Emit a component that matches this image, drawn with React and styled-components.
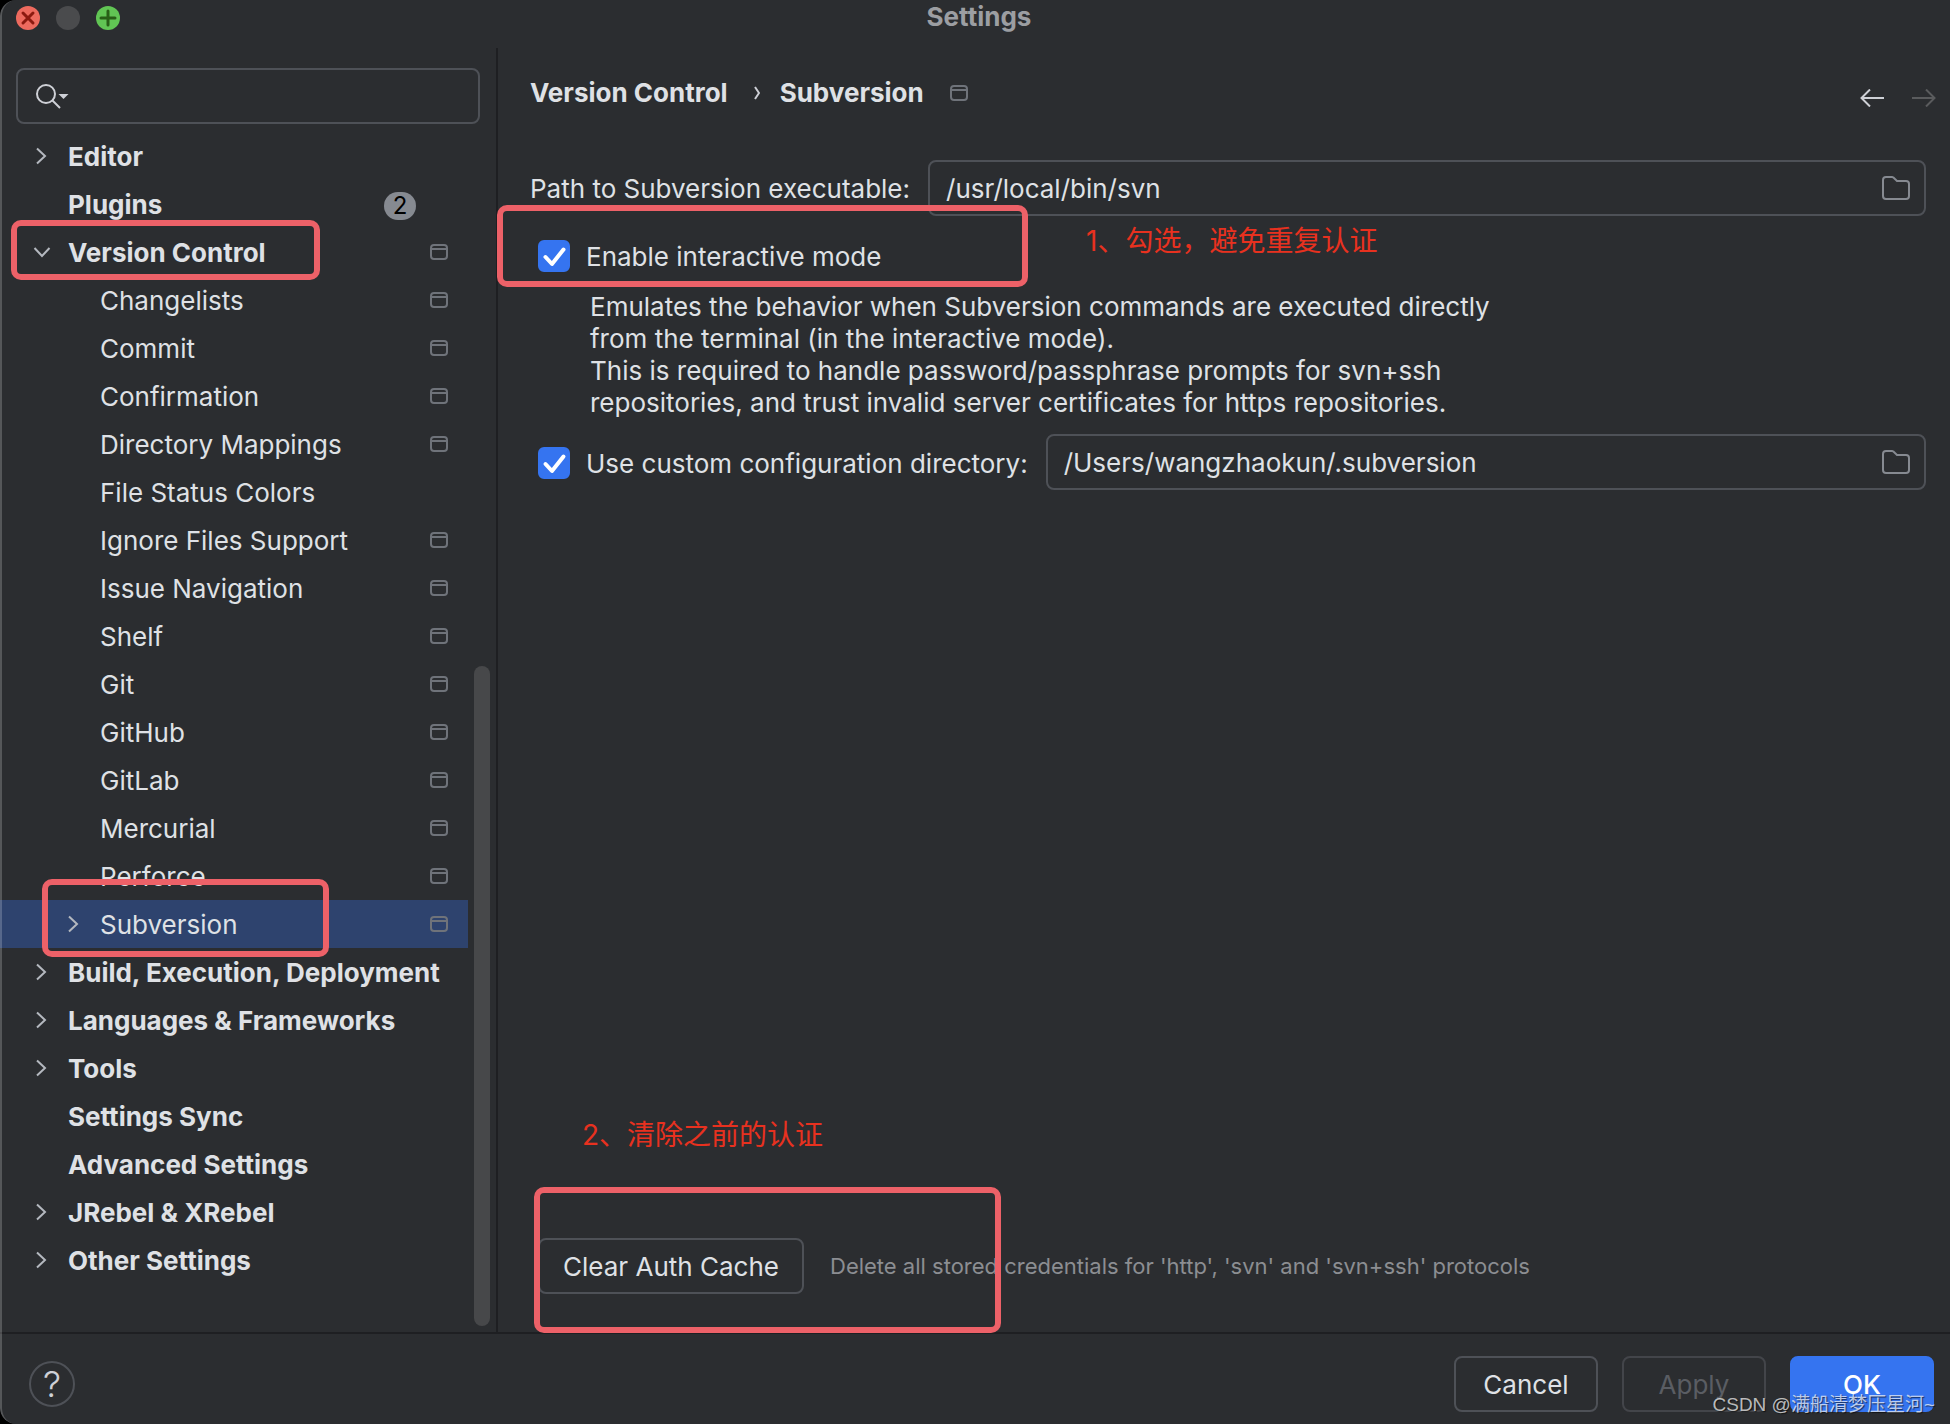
import { useState } from "react";
import styled, { createGlobalStyle, css } from "styled-components";

const GlobalStyle = createGlobalStyle`
  * {
    box-sizing: border-box;
  }

  body {
    margin: 0;
    background: #000000;
    color: #dfe1e5;
    font-family: Inter, "Liberation Sans", "Noto Sans CJK SC", sans-serif;
    font-size: 26px;
    line-height: 32px;
  }

  button,
  input {
    margin: 0;
    padding: 0;
    border: 0;
    background: none;
    color: inherit;
    font: inherit;
  }

  svg {
    display: block;
    flex: none;
  }
`;

const Window = styled.div`
  position: relative;
  display: flex;
  flex-direction: column;
  min-height: 100vh;
  background: #2b2d30;
  border-radius: 16px 0 0 16px;
  overflow: hidden;

  /* light rim on the window edge, drawn over the selected row */
  &::after {
    content: "";
    position: absolute;
    inset: 0;
    border-left: 2px solid rgba(255, 255, 255, 0.2);
    border-radius: 16px 0 0 16px;
    pointer-events: none;
  }
`;

const TitleBar = styled.header`
  display: grid;
  grid-template-columns: 1fr auto 1fr;
  align-items: center;
  height: 48px;
  padding: 0 8px 12px 16px;
`;

const Lights = styled.div`
  display: flex;
  gap: 16px;
`;

const Light = styled.button`
  width: 24px;
  height: 24px;
  border-radius: 50%;
  background: ${(props) => props.$color};
  color: ${(props) => props.$mark};
`;

const WindowTitle = styled.h1`
  margin: 0;
  padding-bottom: 2px;
  color: #9c9ea2;
  font-size: 26px;
  font-weight: 700;
`;

const Body = styled.div`
  display: flex;
  flex: 1;
`;

const Sidebar = styled.aside`
  display: flex;
  flex-direction: column;
  flex: none;
  width: 498px;
  padding-top: 20px;
  border-right: 2px solid #1e1f22;
`;

const SearchBox = styled.label`
  display: flex;
  align-items: center;
  gap: 8px;
  height: 56px;
  margin: 0 16px 8px;
  padding: 0 16px;
  border: 2px solid #4e5157;
  border-radius: 8px;

  input {
    flex: 1;
    min-width: 0;
    outline: none;
  }
`;

const TreeArea = styled.div`
  display: flex;
  flex: 1;
  gap: 6px;
  padding-right: 6px;
`;

const Tree = styled.ul`
  flex: 1;
  margin: 0;
  padding: 0;
  list-style: none;
`;

const Thumb = styled.div`
  align-self: flex-end;
  width: 16px;
  height: 55%;
  margin-bottom: 6px;
  border-radius: 8px;
  background: #47484a;
`;

const TreeItem = styled.li`
  position: relative;
`;

const Row = styled.button`
  display: flex;
  align-items: center;
  width: 100%;
  height: 48px;
  padding: 0 20px 0 ${(props) => (props.$child ? 62 : 30)}px;
  background: ${(props) => (props.$selected ? "#2e436e" : "transparent")};
  font-weight: ${(props) => (props.$child ? 400 : 700)};
  text-align: left;
  white-space: nowrap;
`;

const Arrow = styled.span`
  flex: none;
  width: 38px;
  color: #b4b8bf;
`;

const RowLabel = styled.span`
  flex: 1;
  padding-top: 2px;
`;

const Badge = styled.span`
  width: 32px;
  height: 28px;
  margin: 4px 32px 0 0;
  border-radius: 14px;
  background: #868a91;
  color: #000000;
  font-size: 24px;
  font-weight: 400;
  line-height: 28px;
  text-align: center;
`;

const Main = styled.main`
  display: flex;
  flex-direction: column;
  flex: 1;
  min-width: 0;
`;

const PageHeader = styled.div`
  display: flex;
  justify-content: space-between;
  height: 112px;
  padding: 0 14px 0 32px;
`;

const Breadcrumb = styled.nav`
  display: flex;
  align-items: center;
  height: 90px;
  font-weight: 700;

  svg {
    margin-left: 26px;
  }

  a {
    color: inherit;
    text-decoration: none;
  }

  a + svg + a {
    margin-left: 20px;
  }
`;

const History = styled.div`
  display: flex;
  align-items: center;
  gap: 28px;
  height: 100px;

  button {
    color: #ced0d6;
  }

  button:disabled {
    color: #5a5b5d;
  }
`;

const Form = styled.form`
  display: flex;
  flex-direction: column;
  flex: 1;
  padding: 0 24px 38px 32px;
`;

const FieldRow = styled.div`
  display: flex;
  align-items: center;
  gap: 18px;

  > label {
    padding-top: 2px;
  }
`;

const PathBox = styled.div`
  display: flex;
  align-items: center;
  flex: 1;
  height: 56px;
  padding: 0 14px 0 16px;
  border: 2px solid #4e5157;
  border-radius: 8px;

  input {
    flex: 1;
    min-width: 0;
    padding-top: 2px;
    outline: none;
  }

  button {
    color: #868a91;
  }
`;

const InteractiveRow = styled.div`
  position: relative;
  margin: 23px 0 18px;
  padding-left: 8px;
`;

const ConfigRow = styled(FieldRow)`
  margin-top: 15px;
  padding-left: 8px;
`;

const CheckLabel = styled.label`
  display: flex;
  align-items: center;
  gap: 16px;
  white-space: nowrap;
`;

const CheckText = styled.span`
  padding-top: 2px;
`;

const CheckBox = styled.span`
  display: grid;
  color: #ffffff;

  input,
  svg {
    grid-area: 1 / 1;
  }

  input {
    appearance: none;
    width: 32px;
    height: 32px;
    border: 2px solid #4e5157;
    border-radius: 6px;
  }

  input:checked {
    border-color: #3574f0;
    background: #3574f0;
  }

  svg {
    pointer-events: none;
    visibility: hidden;
  }

  input:checked + svg {
    visibility: visible;
  }
`;

const Description = styled.p`
  margin: 0;
  padding-left: 60px;
`;

const CacheRow = styled.div`
  position: relative;
  display: flex;
  align-items: center;
  gap: 26px;
  margin-top: auto;
  padding-left: 8px;
`;

const Hint = styled.span`
  color: #8c8e92;
  font-size: 22px;
`;

const Button = styled.button`
  min-width: ${(props) => (props.$wide ? 266 : 144)}px;
  height: 56px;
  padding-top: 2px;
  border: 2px solid #4e5157;
  border-radius: 8px;

  &:disabled {
    border-color: #43454a;
    color: #5a5d63;
  }

  ${(props) =>
    props.$primary &&
    css`
      border-color: #3574f0;
      background: #3574f0;
      color: #ffffff;
      font-weight: 500;
    `}
`;

const Footer = styled.footer`
  position: relative;
  display: flex;
  align-items: center;
  justify-content: space-between;
  height: 92px;
  padding: 10px 16px 0 29px;
  border-top: 2px solid #1e1f22;
`;

const HelpButton = styled.button`
  width: 46px;
  height: 46px;
  border: 2px solid #4e5157;
  border-radius: 50%;
  color: #ced0d6;
  font-size: 36px;
  font-weight: 300;
  line-height: 42px;
`;

const Actions = styled.div`
  display: flex;
  gap: 24px;
`;

const Watermark = styled.span`
  position: absolute;
  right: 15px;
  bottom: 4px;
  color: rgba(255, 255, 255, 0.7);
  font-family: "Liberation Sans", "Noto Sans CJK SC", sans-serif;
  font-size: 19px;
  line-height: 30px;
  text-shadow: 1px 1px 1px rgba(0, 0, 0, 0.6);
  pointer-events: none;
`;

// red frame laid over a control
const Mark = styled.span`
  position: absolute;
  z-index: 1;
  top: ${(props) => props.$top}px;
  left: ${(props) => props.$left}px;
  width: ${(props) => props.$width}px;
  height: ${(props) => props.$height}px;
  border: 6px solid #ed6168;
  border-radius: 10px;
  pointer-events: none;
`;

const Note = styled.span`
  position: absolute;
  top: ${(props) => props.$top}px;
  left: ${(props) => props.$left}px;
  color: #e8311f;
  font-family: Inter, "Noto Sans CJK SC", sans-serif;
  font-size: 28px;
  line-height: 40px;
  white-space: nowrap;
`;

const ScopeIcon = () => (
  <svg width="18" height="16" fill="none" stroke="#6f737a" strokeWidth="2">
    <rect x="1" y="1" width="16" height="14" rx="3" />
    <path d="M1 5h16" />
  </svg>
);

const ChevronRight = () => (
  <svg width="24" height="18" fill="none" stroke="currentColor" strokeWidth="2">
    <path d="M7 1.500l8 7.500l-8 7.500" />
  </svg>
);

const ChevronDown = () => (
  <svg width="24" height="18" fill="none" stroke="currentColor" strokeWidth="2">
    <path d="M4.500 5l7.500 8l7.500-8" />
  </svg>
);

const SearchIcon = () => (
  <svg width="36" height="28" fill="none" stroke="#ced0d6" strokeWidth="2">
    <circle cx="12" cy="12" r="9" />
    <path d="M18.500 18.500L26 26" />
    <path d="M24.500 12h10l-5 5z" fill="#ced0d6" stroke="none" />
  </svg>
);

const FolderIcon = () => (
  <svg width="28" height="24" fill="none" stroke="currentColor" strokeWidth="2">
    <path d="M1 4a3 3 0 0 1 3-3h6a2 2 0 0 1 1.400.6L15 5h9a3 3 0 0 1 3 3v12a3 3 0 0 1-3 3H4a3 3 0 0 1-3-3z" />
  </svg>
);

const ArrowIcon = ({ forward }) => (
  <svg width="24" height="18" fill="none" stroke="currentColor" strokeWidth="2">
    <path d={forward ? "M0 9h23M14 .5l8.500 8.500l-8.500 8.500" : "M24 9H1M10 .5L1.500 9l8.500 8.500"} />
  </svg>
);

const Tick = () => (
  <svg width="32" height="32" fill="none" stroke="currentColor" strokeWidth="4">
    <path d="M7.500 17l6.500 7L25.500 9.500" strokeLinecap="round" strokeLinejoin="round" />
  </svg>
);

const treeItems = [
  { label: "Editor", arrow: "right" },
  { label: "Plugins", badge: 2 },
  {
    label: "Version Control",
    arrow: "down",
    scope: true,
    mark: { $top: -8, $left: 11, $width: 309, $height: 60 },
  },
  { label: "Changelists", child: true, scope: true },
  { label: "Commit", child: true, scope: true },
  { label: "Confirmation", child: true, scope: true },
  { label: "Directory Mappings", child: true, scope: true },
  { label: "File Status Colors", child: true },
  { label: "Ignore Files Support", child: true, scope: true },
  { label: "Issue Navigation", child: true, scope: true },
  { label: "Shelf", child: true, scope: true },
  { label: "Git", child: true, scope: true },
  { label: "GitHub", child: true, scope: true },
  { label: "GitLab", child: true, scope: true },
  { label: "Mercurial", child: true, scope: true },
  { label: "Perforce", child: true, scope: true },
  {
    label: "Subversion",
    child: true,
    scope: true,
    arrow: "right",
    mark: { $top: -21, $left: 42, $width: 287, $height: 78 },
  },
  { label: "Build, Execution, Deployment", arrow: "right" },
  { label: "Languages & Frameworks", arrow: "right" },
  { label: "Tools", arrow: "right" },
  { label: "Settings Sync" },
  { label: "Advanced Settings" },
  { label: "JRebel & XRebel", arrow: "right" },
  { label: "Other Settings", arrow: "right" },
];

function SettingsTree() {
  const [selected, setSelected] = useState("Subversion");

  return (
    <TreeArea>
      <Tree>
        {treeItems.map((item) => (
          <TreeItem key={item.label}>
            <Row
              type="button"
              $child={item.child}
              $selected={item.label === selected}
              onClick={() => setSelected(item.label)}
            >
              <Arrow>
                {item.arrow === "right" && <ChevronRight />}
                {item.arrow === "down" && <ChevronDown />}
              </Arrow>
              <RowLabel>{item.label}</RowLabel>
              {item.badge && <Badge>{item.badge}</Badge>}
              {item.scope && <ScopeIcon />}
            </Row>
            {item.mark && <Mark {...item.mark} />}
          </TreeItem>
        ))}
      </Tree>
      <Thumb />
    </TreeArea>
  );
}

function PathField({ id, label, value }) {
  return (
    <PathBox>
      <input id={id} type="text" aria-label={label} defaultValue={value} />
      <button type="button" aria-label="Browse">
        <FolderIcon />
      </button>
    </PathBox>
  );
}

function Check({ children }) {
  return (
    <CheckLabel>
      <CheckBox>
        <input type="checkbox" defaultChecked />
        <Tick />
      </CheckBox>
      <CheckText>{children}</CheckText>
    </CheckLabel>
  );
}

export default function App() {
  return (
    <Window>
      <GlobalStyle />
      <TitleBar>
        <Lights>
          <Light type="button" aria-label="Close" $color="#ed6a5e" $mark="#8c1a10">
            <svg width="24" height="24" stroke="currentColor" strokeWidth="3">
              <path d="M7 7l10 10M17 7L7 17" strokeLinecap="round" />
            </svg>
          </Light>
          <Light type="button" aria-label="Minimize" $color="#4a4b4d" />
          <Light type="button" aria-label="Zoom" $color="#61c554" $mark="#285f17">
            <svg width="24" height="24" stroke="currentColor" strokeWidth="3">
              <path d="M12 5v14M5 12h14" strokeLinecap="round" />
            </svg>
          </Light>
        </Lights>
        <WindowTitle>Settings</WindowTitle>
      </TitleBar>

      <Body>
        <Sidebar>
          <SearchBox>
            <SearchIcon />
            <input type="text" aria-label="Search settings" />
          </SearchBox>
          <SettingsTree />
        </Sidebar>

        <Main>
          <PageHeader>
            <Breadcrumb>
              <a href="#version-control">Version Control</a>
              <svg width="6" height="14" fill="none" stroke="#ced0d6" strokeWidth="2">
                <path d="M1 1l4 6l-4 6" />
              </svg>
              <a href="#subversion">Subversion</a>
              <ScopeIcon />
            </Breadcrumb>
            <History>
              <button type="button" aria-label="Back">
                <ArrowIcon />
              </button>
              <button type="button" aria-label="Forward" disabled>
                <ArrowIcon forward />
              </button>
            </History>
          </PageHeader>

          <Form>
            <FieldRow>
              <label htmlFor="executable">Path to Subversion executable:</label>
              <PathField id="executable" value="/usr/local/bin/svn" />
            </FieldRow>

            <InteractiveRow>
              <Check>Enable interactive mode</Check>
              <Mark $top={-34} $left={-33} $width={531} $height={82} />
              <Note $top={-18} $left={556}>
                1、勾选，避免重复认证
              </Note>
            </InteractiveRow>

            <Description>
              Emulates the behavior when Subversion commands are executed directly
              <br />
              from the terminal (in the interactive mode).
              <br />
              This is required to handle password/passphrase prompts for svn+ssh
              <br />
              repositories, and trust invalid server certificates for https repositories.
            </Description>

            <ConfigRow as="div">
              <Check>Use custom configuration directory:</Check>
              <PathField
                id="config-dir"
                label="Custom configuration directory"
                value="/Users/wangzhaokun/.subversion"
              />
            </ConfigRow>

            <CacheRow>
              <Button type="button" $wide>
                Clear Auth Cache
              </Button>
              <Hint>Delete all stored credentials for 'http', 'svn' and 'svn+ssh' protocols</Hint>
              <Mark $top={-51} $left={4} $width={467} $height={146} />
              <Note $top={-123} $left={52}>
                2、清除之前的认证
              </Note>
            </CacheRow>
          </Form>
        </Main>
      </Body>

      <Footer>
        <HelpButton type="button" aria-label="Help">
          ?
        </HelpButton>
        <Actions>
          <Button type="button">Cancel</Button>
          <Button type="button" disabled>
            Apply
          </Button>
          <Button type="button" $primary>
            OK
          </Button>
        </Actions>
        <Watermark>CSDN @满船清梦压星河~</Watermark>
      </Footer>
    </Window>
  );
}
